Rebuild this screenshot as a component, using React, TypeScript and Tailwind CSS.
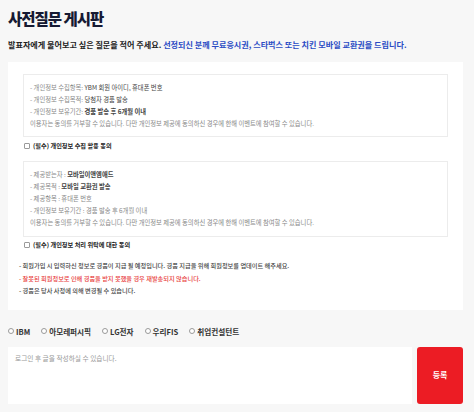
const font = { fontFamily: '"Noto Sans CJK KR", "Noto Sans", sans-serif' }

function Checkbox({ label }: { label: string }) {
  return (
    <label className="flex items-center gap-[3px] ml-[1px] h-[12px]">
      <span className="w-[6px] h-[6px] border border-[#9a9a9a] rounded-[1px] bg-white" />
      <span className="text-[6.2px] font-bold text-[#222]">{label}</span>
    </label>
  )
}

function Radio({ label }: { label: string }) {
  return (
    <label className="flex items-center gap-[2px]">
      <span className="w-[6px] h-[6px] rounded-full border border-[#9a9a9a] bg-white" />
      <span className="text-[7.6px] font-bold text-[#333]">{label}</span>
    </label>
  )
}

export default function App() {
  return (
    <div style={font} className="w-[474px] h-[412px] bg-[#f7f7f7] px-2 pt-[8px] overflow-hidden">
      <h1 className="text-[15.5px] leading-[20px] font-black text-[#161a33] tracking-[-1px]">
        사전질문 게시판
      </h1>
      <p className="mt-[11px] text-[8.1px] leading-[12px] font-bold text-[#222] whitespace-nowrap">
        발표자에게 물어보고 싶은 질문을 적어 주세요.{' '}
        <span className="text-[#2a4bc4]">
          선정되신 분께 무료응시권, 스타벅스 또는 치킨 모바일 교환권을 드립니다.
        </span>
      </p>

      <div className="mt-[11px] w-[455px] bg-white px-[15px] pt-[12px] pb-[12px]">
        <div className="border border-[#ececec] pl-[6px] pt-[7px] pb-[6px] text-[6.3px] leading-[12px] text-[#888]">
          <p>
            - 개인정보 수집항목: <span className="text-[#444]">YBM 회원 아이디, 휴대폰 번호</span>
          </p>
          <p>
            - 개인정보 수집목적: <span className="text-[#444]">당첨자 경품 발송</span>
          </p>
          <p>
            - 개인정보 보유기간: <span className="font-bold text-[#444]">경품 발송 후 6개월 이내</span>
          </p>
          <p>이용자는 동의를 거부할 수 있습니다. 다만 개인정보 제공에 동의하신 경우에 한해 이벤트에 참여할 수 있습니다.</p>
        </div>
        <div className="mt-[3px]">
          <Checkbox label="(필수) 개인정보 수집 활용 동의" />
        </div>

        <div className="mt-[9px] border border-[#ececec] pl-[6px] pt-[7px] pb-[7px] text-[6.3px] leading-[12px] text-[#888]">
          <p>
            - 제공받는자 : <span className="font-bold text-[#444]">모바일이앤엠애드</span>
          </p>
          <p>
            - 제공목적 : <span className="font-bold text-[#444]">모바일 교환권 발송</span>
          </p>
          <p>- 제공항목 : 휴대폰 번호</p>
          <p>- 개인정보 보유기간 : 경품 발송 후 6개월 이내</p>
          <p>이용자는 동의를 거부할 수 있습니다. 다만 개인정보 제공에 동의하신 경우에 한해 이벤트에 참여할 수 있습니다.</p>
        </div>
        <div className="mt-[2px]">
          <Checkbox label="(필수) 개인정보 처리 위탁에 대한 동의" />
        </div>

        <div className="mt-[9px] -ml-[4px] text-[6.2px] leading-[12.5px] font-medium text-[#444]">
          <p>- 회원가입 시 입력하신 정보로 경품이 지급 될 예정입니다. 경품 지급을 위해 회원정보를 업데이트 해주세요.</p>
          <p className="text-[#e8403c]">- 잘못된 회원정보로 인해 경품을 받지 못했을 경우 재발송되지 않습니다.</p>
          <p>- 경품은 당사 사정에 의해 변경될 수 있습니다.</p>
        </div>
      </div>

      <div className="mt-[16px] h-[12px] flex items-center gap-[11px]">
        <Radio label="IBM" />
        <Radio label="아모레퍼시픽" />
        <Radio label="LG전자" />
        <Radio label="우리FIS" />
        <Radio label="취업컨설턴트" />
      </div>

      <div className="mt-[9px] w-[455px] h-[57px] flex gap-[5px]">
        <div className="flex-1 bg-white px-[7px] pt-[6px] text-[6.7px] leading-[10px] text-[#999]">
          로그인 후 글을 작성하실 수 있습니다.
        </div>
        <button className="w-[46px] h-full rounded-[3px] bg-[#ec1c24] text-white text-[8px] font-bold flex items-center justify-center">
          등록
        </button>
      </div>
    </div>
  )
}
